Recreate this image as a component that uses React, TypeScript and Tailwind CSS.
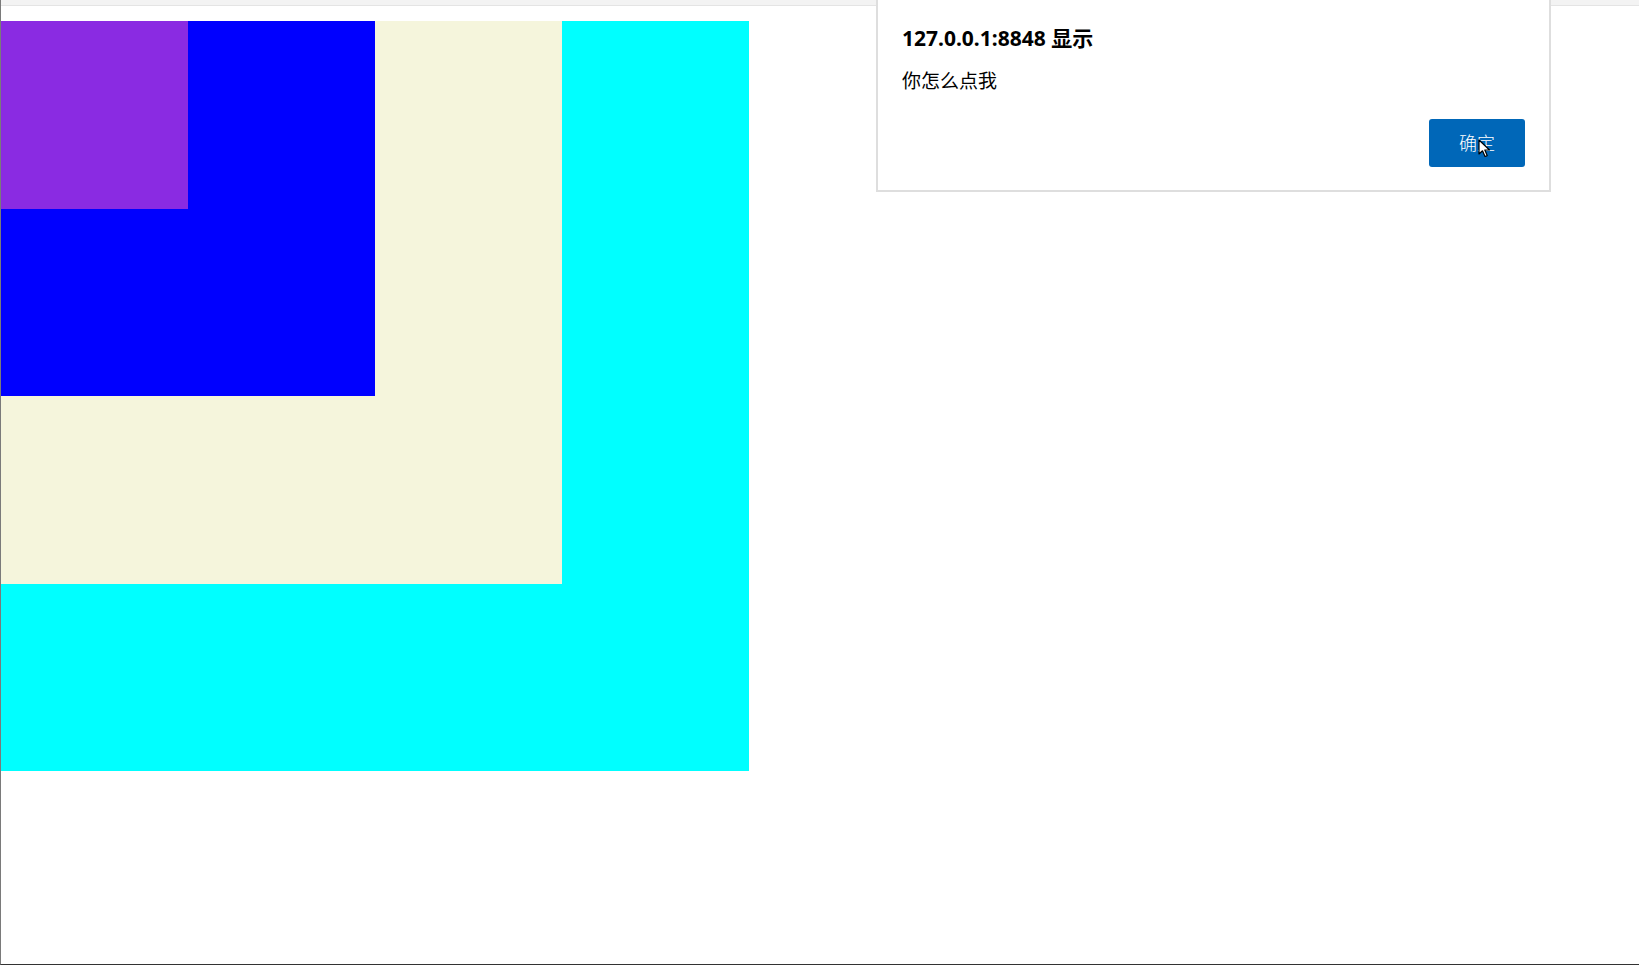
import React from 'react';

const FONT = '"Noto Sans", "Noto Sans CJK SC", sans-serif';

const AlertDialog: React.FC = () => {
    return (
        <div
            className="absolute left-[875px] top-0 w-[675px] h-[192px] bg-white border-2 border-t-0 border-[#dedede] px-[24px] flex flex-col"
            style={{ fontFamily: FONT }}
        >
            <div className="pt-[23px] text-[21px] leading-[30px] font-bold text-black">127.0.0.1:8848 显示</div>
            <div className="mt-[14px] text-[19px] leading-[28px] text-black">你怎么点我</div>
            <div className="flex justify-end mt-[24px]">
                <button className="relative w-[96px] h-[48px] bg-[#0067b8] rounded-[3px] text-white text-[18px] font-light leading-none">
                    确定
                    {/* mouse pointer */}
                    <svg className="absolute left-[49px] top-[20px]" width="13" height="19" viewBox="0 0 13 19">
                        <path d="M1 1 L1 15 L4.5 11.8 L7 17.5 L9.2 16.6 L6.8 11 L11.5 11 Z" fill="white" stroke="black" strokeWidth="1.2" strokeLinejoin="round" />
                    </svg>
                </button>
            </div>
        </div>
    );
};

export default function App() {
    return (
        <div className="relative w-[1639px] h-[965px] bg-white border-l border-[#7a7a7a] border-b border-b-[#333] overflow-hidden">
            {/* browser strip */}
            <div className="h-[6px] bg-[#f3f3f3] border-b border-[#e4e4e4]" />

            {/* nested squares */}
            <div className="pt-[15px]">
                <div className="w-[748px] h-[750px] bg-[#00ffff]">
                    <div className="w-[561px] h-[563px] bg-[#f5f5dc]">
                        <div className="w-[374px] h-[375px] bg-[#0000ff]">
                            <div className="w-[187px] h-[188px] bg-[#8a2be2]" />
                        </div>
                    </div>
                </div>
            </div>

            <AlertDialog />
        </div>
    );
}
